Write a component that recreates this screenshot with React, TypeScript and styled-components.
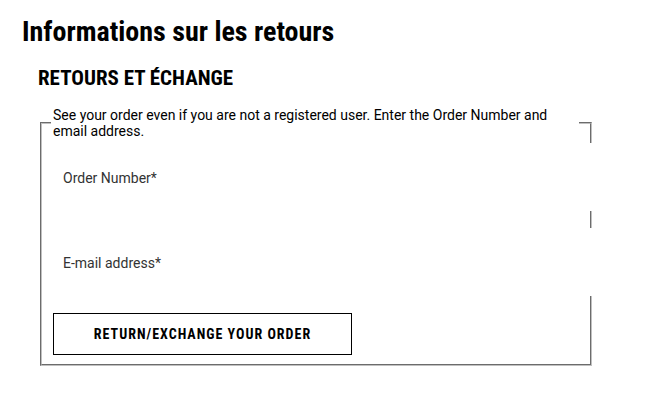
import React from 'react';
import styled, { createGlobalStyle } from 'styled-components';

const GlobalStyle = createGlobalStyle`
  html, body {
    margin: 0;
    background: #fff;
  }
  body {
    font-family: Roboto, "Liberation Sans", sans-serif;
    color: #000;
  }
`;

const condensed = `"Roboto Condensed", "DejaVu Sans Condensed", Roboto, sans-serif`;

const Page = styled.main`
  padding: 15px 0 0 22px;
`;

const Title = styled.h1`
  margin: 0;
  font-family: ${condensed};
  font-size: 28px;
  line-height: 34px;
  font-weight: 700;
`;

const Subtitle = styled.h2`
  margin: 17px 0 0 16px;
  font-family: ${condensed};
  font-size: 21px;
  line-height: 25px;
  font-weight: 700;
  text-transform: uppercase;
`;

const Fieldset = styled.fieldset`
  box-sizing: border-box;
  width: 551px;
  margin: 16px 0 0 18px;
  padding: 0 11px 9px;
  border: 2px groove #c0c0c0;
`;

const Legend = styled.legend`
  box-sizing: border-box;
  width: 528px;
  margin-left: -2px;
  padding: 0 2px;
  font-size: 14px;
  line-height: 16px;
`;

const FormGroup = styled.div<{ $last?: boolean }>`
  margin: ${(p) => (p.$last ? '0 -14px 0 0' : '4px -14px 17px 0')};
  padding: 27px 12px 0 10px;
  background: #fff;
  position: relative;
`;

const Label = styled.label`
  display: block;
  font-size: 14px;
  line-height: 16px;
  color: #333;
`;

const Input = styled.input`
  display: block;
  box-sizing: border-box;
  width: 100%;
  height: 25px;
  border: none;
  outline: none;
  background: transparent;
  font: inherit;
`;

const Button = styled.button`
  display: block;
  box-sizing: border-box;
  width: 299px;
  height: 42px;
  margin-top: 17px;
  border: 1px solid #000;
  background: #fff;
  font-family: ${condensed};
  font-size: 14px;
  font-weight: 700;
  letter-spacing: 1px;
  text-transform: uppercase;
  color: #000;
  cursor: pointer;
`;

export default function App() {
  return (
    <Page>
      <GlobalStyle />
      <Title>Informations sur les retours</Title>
      <Subtitle>Retours et échange</Subtitle>
      <Fieldset>
        <Legend>
          See your order even if you are not a registered user. Enter the Order Number and email address.
        </Legend>
        <FormGroup>
          <Label htmlFor="order">Order Number*</Label>
          <Input id="order" type="text" />
        </FormGroup>
        <FormGroup $last>
          <Label htmlFor="email">E-mail address*</Label>
          <Input id="email" type="email" />
        </FormGroup>
        <Button type="button">Return/Exchange your order</Button>
      </Fieldset>
    </Page>
  );
}
